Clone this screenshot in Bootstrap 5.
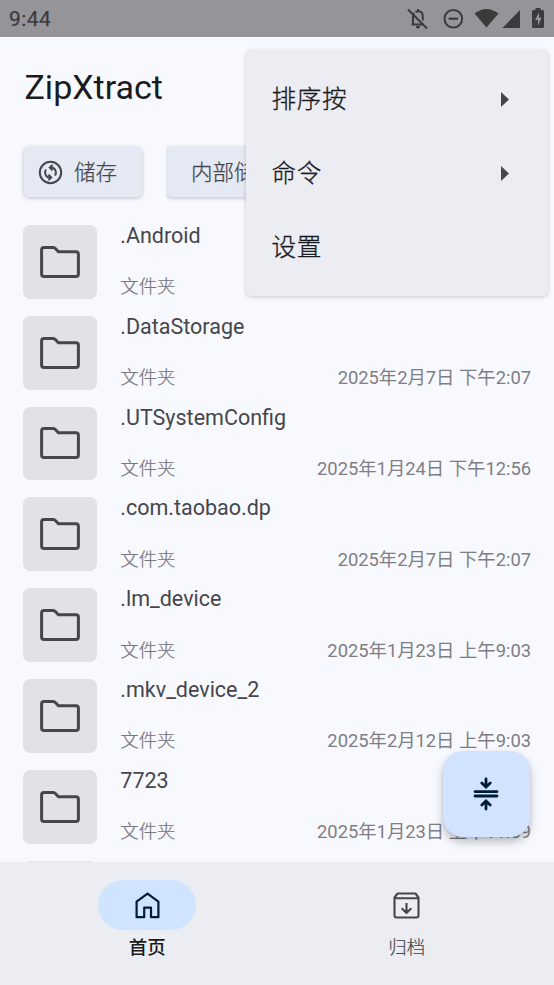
<!DOCTYPE html>
<html lang="zh-CN">
<head>
<meta charset="utf-8">
<meta name="viewport" content="width=device-width, initial-scale=1">
<title>ZipXtract</title>
<link href="https://cdn.jsdelivr.net/npm/bootstrap@5.3.0/dist/css/bootstrap.min.css" rel="stylesheet">
<style>
body{font-family:Roboto,"Noto Sans CJK SC",sans-serif;background:#f8f9ff;color:#1a1b20;height:985px}
svg{display:block;flex:none}
.statusbar{height:37px;background:#959499;color:#3b3b3d;font-size:21px;font-weight:400;-webkit-text-stroke:.25px #3b3b3d;padding:0 9px}
.statusbar span{padding-top:3px;letter-spacing:.4px}
.app-title{font-size:34px;line-height:39px;padding:31px 25px 0 24.5px;height:110px;margin:0;font-weight:400}
.chips{padding-left:24px;gap:24px;height:78px}
.chip{height:50px;border-radius:5px;background:#e4e9f4;color:#44474e;font-size:21.5px;font-weight:300;-webkit-text-stroke:.25px #44474e;box-shadow:0 1px 4px rgba(0,0,0,.24)}
.chip-root{width:118px;padding-left:14px;gap:11px}
.chip-root span,.chip-path span{padding-top:2px}
.path-scroll{overflow:hidden;height:64px;margin-top:-6px;padding-top:6px}
.chip-path{width:160px;padding-left:25px}
.files{flex:1;min-height:0;overflow:hidden}
.file-row{height:73.8px;margin-bottom:17px;padding:0 23px;gap:23.3px}
.tile{width:74px;height:73.8px;border-radius:7px;background:#e1e2e7;color:#47464c}
.file-name{font-size:21.5px;line-height:22.6px;color:#45464c}
.file-meta{font-size:18.4px;line-height:23.4px;color:#7f7e84}
.file-date{letter-spacing:-.04px}
.file-kind{font-weight:300;color:#77767c;-webkit-text-stroke:.2px #77767c}
.bottom-nav{height:123px;background:#ecedf2;padding:18px 17.5px 0}
.tab{color:#44474a;font-size:18.45px;line-height:24px;gap:6px;font-weight:300;-webkit-text-stroke:.2px}
.pill{width:98px;height:50px}
.tab-on{color:#1a1b20;font-weight:500;-webkit-text-stroke:0}
.tab-on .pill{background:#d0e3ff;color:#001d36}
.popup{left:246px;top:50px;width:302px;height:246px;padding:12px 0;background:#ecedf2;border-radius:6px;box-shadow:0 1px 4px rgba(0,0,0,.2)}
.popup-item{height:74px;padding:0 39px 0 25.5px;font-size:24.6px;letter-spacing:.7px;color:#1a1b20;font-weight:300;-webkit-text-stroke:.3px #1a1b20}
.popup-item span{padding-top:3px}
.fab{left:443px;top:751px;width:87px;height:86px;padding:0 1px 1px 0;border-radius:20px;background:#d1e3ff;color:#001d36;box-shadow:0 5px 10px rgba(0,0,0,.25),0 1px 3px rgba(0,0,0,.08)}
</style>
<script src="https://cdn.jsdelivr.net/npm/bootstrap@5.3.0/dist/js/bootstrap.bundle.min.js"></script>
</head>
<body class="d-flex flex-column overflow-hidden position-relative">
<svg class="d-none">
<symbol id="folder" viewBox="0 0 40 32"><path d="M4 1.6H13.2Q14.6 1.6 15.6 2.7L18.4 5.7H36Q38.4 5.7 38.4 8V28Q38.4 30.4 36 30.4H4Q1.6 30.4 1.6 28V4Q1.6 1.6 4 1.6Z" fill="none" stroke="currentColor" stroke-width="3"/></symbol>
</svg>
<header class="statusbar d-flex align-items-center justify-content-between">
<span>9:44</span>
<svg width="140" height="37" viewBox="405 0 140 37">
<g fill="none" stroke="#3b3b3d" stroke-width="2">
<path d="M408 9.5 427 28.5M411.5 24.5H424M413 24V16.5Q413 14.5 414.2 13M415.5 12Q422.5 9.5 422.8 16V20.5M418 9V12"/>
<circle cx="453.3" cy="18.7" r="8.8"/><path d="M448.6 18.7H458" stroke-width="2.2"/></g>
<g fill="#3b3b3d"><path d="M416 26H420Q420 28.7 418 28.7 416 28.7 416 26ZM474.5 13.5Q486.5 4.5 498.5 13.5L486.5 27.5ZM502.5 28H520V10Z"/>
<path d="M533.5 10H535.5V8H540.5V10H542.5Q544 10 544 11.5V26.5Q544 28 542.5 28H533.5Q532 28 532 26.5V11.5Q532 10 533.5 10Z"/></g>
<path d="M539 12.5 535 20H538V26L541.5 17.5H539Z" fill="#959499"/>
</svg>
</header>
<h1 class="app-title">ZipXtract</h1>
<div class="chips d-flex align-items-start">
<div class="chip chip-root d-flex align-items-center flex-shrink-0">
<svg width="25" height="25" viewBox="0 0 25 25" fill="none" stroke="currentColor" stroke-width="2"><circle cx="12.5" cy="12.5" r="10.7"/><path d="M10.3 17.5A5.5 5.5 0 0 1 8 9.5M14.7 7.5A5.5 5.5 0 0 1 17 15.5M14.5 4.9 11.8 7.6 14.5 10.3M10.5 14.7 13.2 17.4 10.5 20.1M10.3 17.4H13M12 7.6H14.7"/></svg>
<span>储存</span></div>
<div class="path-scroll flex-grow-1"><div class="chip chip-path d-flex align-items-center text-nowrap"><span>内部储存</span></div></div>
</div>
<main class="files">
<div class="file-row d-flex"><div class="tile d-flex align-items-center justify-content-center flex-shrink-0"><svg width="40" height="32"><use href="#folder"/></svg></div><div class="d-flex flex-column justify-content-between flex-grow-1"><div class="file-name">.Android</div><div class="file-meta d-flex justify-content-between"><span class="file-kind">文件夹</span></div></div></div>
<div class="file-row d-flex"><div class="tile d-flex align-items-center justify-content-center flex-shrink-0"><svg width="40" height="32"><use href="#folder"/></svg></div><div class="d-flex flex-column justify-content-between flex-grow-1"><div class="file-name">.DataStorage</div><div class="file-meta d-flex justify-content-between"><span class="file-kind">文件夹</span><span class="file-date">2025年2月7日 下午2:07</span></div></div></div>
<div class="file-row d-flex"><div class="tile d-flex align-items-center justify-content-center flex-shrink-0"><svg width="40" height="32"><use href="#folder"/></svg></div><div class="d-flex flex-column justify-content-between flex-grow-1"><div class="file-name">.UTSystemConfig</div><div class="file-meta d-flex justify-content-between"><span class="file-kind">文件夹</span><span class="file-date">2025年1月24日 下午12:56</span></div></div></div>
<div class="file-row d-flex"><div class="tile d-flex align-items-center justify-content-center flex-shrink-0"><svg width="40" height="32"><use href="#folder"/></svg></div><div class="d-flex flex-column justify-content-between flex-grow-1"><div class="file-name">.com.taobao.dp</div><div class="file-meta d-flex justify-content-between"><span class="file-kind">文件夹</span><span class="file-date">2025年2月7日 下午2:07</span></div></div></div>
<div class="file-row d-flex"><div class="tile d-flex align-items-center justify-content-center flex-shrink-0"><svg width="40" height="32"><use href="#folder"/></svg></div><div class="d-flex flex-column justify-content-between flex-grow-1"><div class="file-name">.lm_device</div><div class="file-meta d-flex justify-content-between"><span class="file-kind">文件夹</span><span class="file-date">2025年1月23日 上午9:03</span></div></div></div>
<div class="file-row d-flex"><div class="tile d-flex align-items-center justify-content-center flex-shrink-0"><svg width="40" height="32"><use href="#folder"/></svg></div><div class="d-flex flex-column justify-content-between flex-grow-1"><div class="file-name">.mkv_device_2</div><div class="file-meta d-flex justify-content-between"><span class="file-kind">文件夹</span><span class="file-date">2025年2月12日 上午9:03</span></div></div></div>
<div class="file-row d-flex"><div class="tile d-flex align-items-center justify-content-center flex-shrink-0"><svg width="40" height="32"><use href="#folder"/></svg></div><div class="d-flex flex-column justify-content-between flex-grow-1"><div class="file-name">7723</div><div class="file-meta d-flex justify-content-between"><span class="file-kind">文件夹</span><span class="file-date">2025年1月23日 上午11:39</span></div></div></div>
<div class="file-row d-flex"><div class="tile"></div></div>
</main>
<nav class="bottom-nav d-flex flex-shrink-0">
<div class="tab tab-on d-flex flex-column align-items-center w-50"><div class="pill rounded-pill d-flex align-items-center justify-content-center"><svg width="25" height="27" viewBox="0 0 25 27" fill="none" stroke="currentColor" stroke-width="2.2" stroke-linejoin="round"><path d="M1.6 9.7 12.5 1.6 23.4 9.7V25.2H16V15.7H9.2V25.2H1.6Z"/></svg></div><span>首页</span></div>
<div class="tab d-flex flex-column align-items-center w-50"><div class="pill d-flex align-items-center justify-content-center"><svg width="27" height="27" viewBox="0 0 27 27" fill="none" stroke="currentColor" stroke-width="2.1" stroke-linejoin="round"><path d="M1.5 5.5 4.5 1.5H22.5L25.5 5.5V23.5Q25.5 25.5 23.5 25.5H3.5Q1.5 25.5 1.5 23.5ZM1.5 6.2H25.5M13.5 11V20.5M8.7 16.3 13.5 20.9 18.3 16.3"/></svg></div><span>归档</span></div>
</nav>
<button class="fab position-absolute border-0 d-flex align-items-center justify-content-center" aria-label="压缩"><svg width="26" height="34" viewBox="0 0 26 34" fill="none" stroke="currentColor" stroke-width="2.8" stroke-linecap="round"><path d="M2 14.6H24M2 19H24M13 2V9M8.8 6 13 10 17.2 6M13 32V25M8.8 28 13 24 17.2 28"/></svg></button>
<div class="popup position-absolute">
<div class="popup-item d-flex align-items-center justify-content-between"><span>排序按</span><svg width="8" height="15"><path d="M0 0 8 7.5 0 15Z" fill="#47464c"/></svg></div>
<div class="popup-item d-flex align-items-center justify-content-between"><span>命令</span><svg width="8" height="15"><path d="M0 0 8 7.5 0 15Z" fill="#47464c"/></svg></div>
<div class="popup-item d-flex align-items-center"><span>设置</span></div>
</div>
</body>
</html>
